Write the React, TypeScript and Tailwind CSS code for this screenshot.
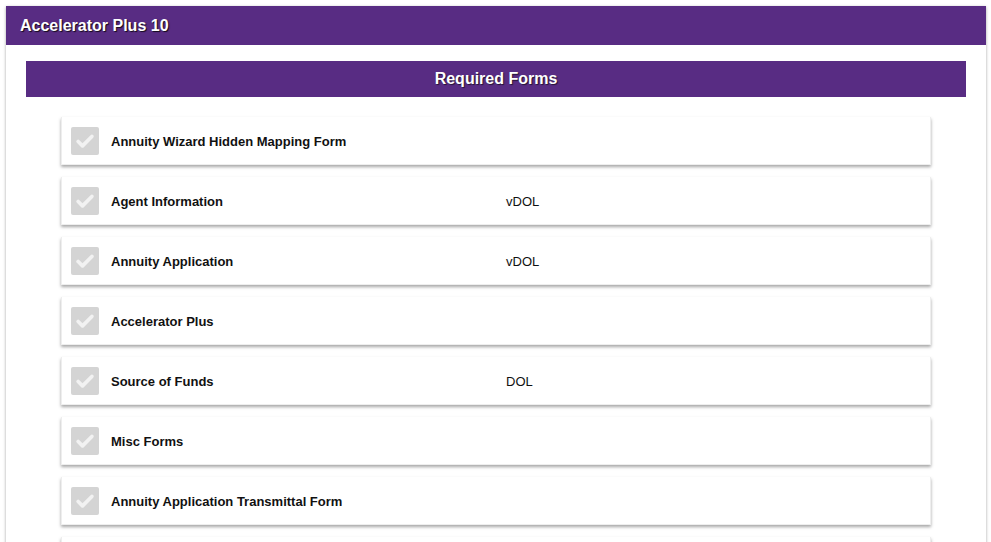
import React from "react";

const rows: { name: string; tag?: string }[] = [
  { name: "Annuity Wizard Hidden Mapping Form" },
  { name: "Agent Information", tag: "vDOL" },
  { name: "Annuity Application", tag: "vDOL" },
  { name: "Accelerator Plus" },
  { name: "Source of Funds", tag: "DOL" },
  { name: "Misc Forms" },
  { name: "Annuity Application Transmittal Form" },
  { name: "" },
];

function Check() {
  return (
    <div className="w-[28px] h-[28px] bg-[#d4d4d4] rounded-[2px] flex items-center justify-center shrink-0">
      <svg width="22" height="22" viewBox="0 0 24 24">
        <path d="M4.5 12.5l4.8 4.8L19.5 7" fill="none" stroke="#f2f2f2" strokeWidth="4" strokeLinecap="round" strokeLinejoin="round" />
      </svg>
    </div>
  );
}

export default function App() {
  return (
    <div className="w-[991px] h-[542px] overflow-hidden bg-white pt-[6px] pl-[6px] pr-[5px]" style={{ fontFamily: '"Liberation Sans", Arial, sans-serif' }}>
      <div className="bg-white shadow-[0_1px_3px_rgba(0,0,0,0.35)] h-[560px]">
        <div className="h-[39px] bg-[#582c83] flex items-center pl-[14px] text-white font-bold text-[16px] [text-shadow:1px_1px_1px_rgba(0,0,0,0.8)]">
          Accelerator Plus 10
        </div>
        <div className="px-[20px] pt-[16px]">
          <div className="h-[36px] bg-[#582c83] flex items-center justify-center text-white font-bold text-[16px] [text-shadow:1px_1px_1px_rgba(0,0,0,0.6)]">
            Required Forms
          </div>
          <div className="flex flex-col gap-[12px] pt-[20px] pl-[35px] pr-[35px]">
            {rows.map((r, i) => (
              <div key={i} className="h-[48px] bg-white shadow-[0_2px_3px_rgba(0,0,0,0.35)] border-x border-b border-[#eeeeee] flex items-center pl-[9px]">
                <Check />
                <div className="w-[407px] pl-[12px] pt-[2px] font-bold text-[13px] text-[#111]">{r.name}</div>
                <div className="pt-[2px] text-[13px] text-[#111]">{r.tag ?? ""}</div>
              </div>
            ))}
          </div>
        </div>
      </div>
    </div>
  );
}
